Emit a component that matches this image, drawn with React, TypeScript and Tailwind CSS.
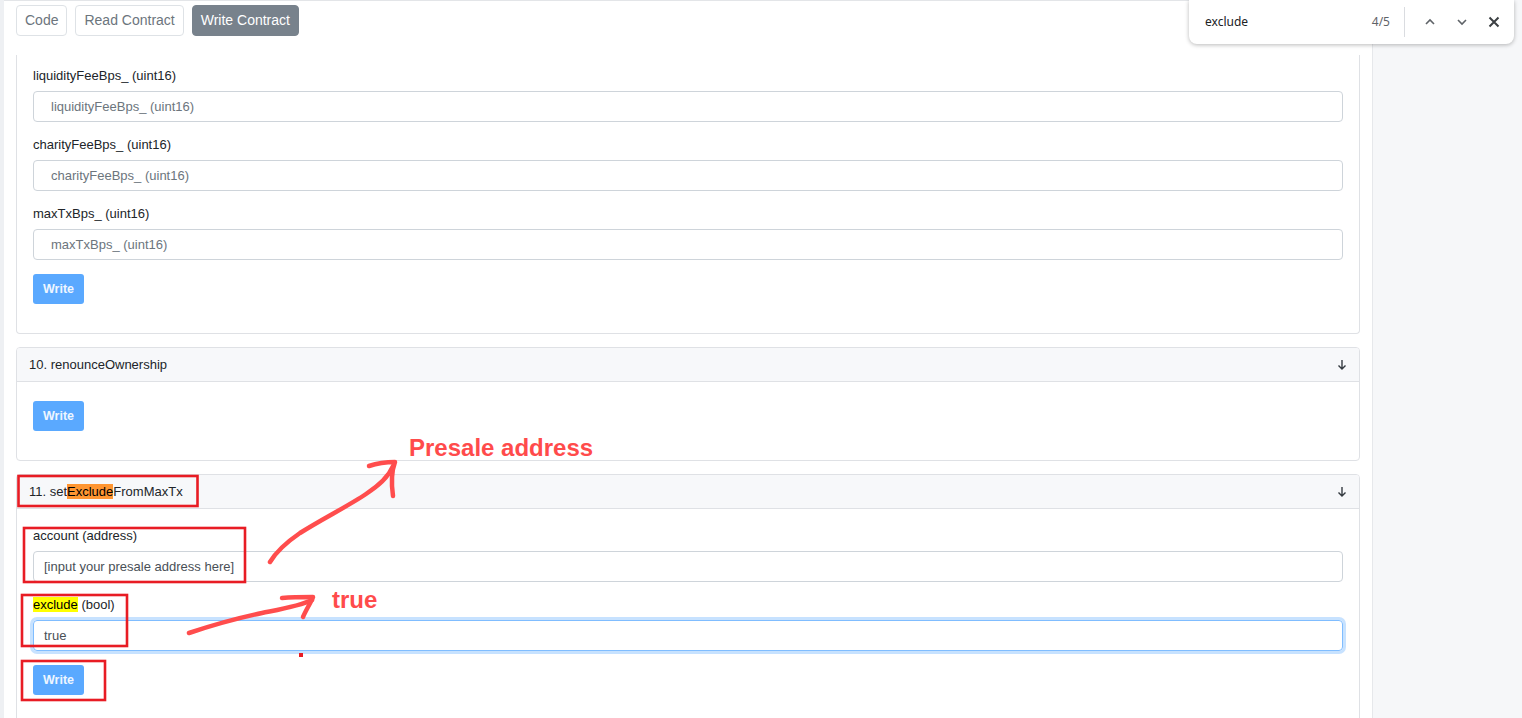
import React from "react";

const font = "font-['Liberation_Sans',Arial,sans-serif]";

function DownArrow() {
  return (
    <svg width="10" height="12" viewBox="0 0 10 12" className="text-[#343a40]">
      <path d="M5 1v9M1.5 6.5 5 10l3.5-3.5" fill="none" stroke="currentColor" strokeWidth="1.4" />
    </svg>
  );
}

function Field({ label, children }: { label: React.ReactNode; children: React.ReactNode }) {
  return (
    <div className="mb-[14px]">
      <div className="mb-[6px] text-[13px] leading-[18px] text-[#212529]">{label}</div>
      {children}
    </div>
  );
}

function Box({ placeholder, value, focused }: { placeholder?: string; value?: string; focused?: boolean }) {
  return (
    <div
      className={
        focused
          ? "flex h-[31px] items-center rounded-[4px] border border-[#80bdff] pl-[10px] text-[13px] text-[#495057] shadow-[0_0_0_3px_rgba(0,123,255,0.22)]"
          : "flex h-[31px] items-center rounded-[4px] border border-[#ced4da] pl-[10px] text-[13px] text-[#495057]"
      }
    >
      {placeholder ? <span className="pl-[7px] text-[#6c757d]">{placeholder}</span> : value}
    </div>
  );
}

function WriteButton() {
  return (
    <div className="flex h-[30px] w-[51px] items-center justify-center rounded-[3px] bg-[#5aa9ff] text-[12.5px] font-bold text-[#eef6ff]">
      Write
    </div>
  );
}

function Header({ children }: { children: React.ReactNode }) {
  return (
    <div className="flex h-[34px] items-center justify-between border-b border-[#dfe1e5] bg-[#f7f8fa] px-[12px] text-[13px] text-[#212529]">
      <span>{children}</span>
      <DownArrow />
    </div>
  );
}

export default function App() {
  return (
    <div className={`relative flex h-[718px] w-[1522px] overflow-hidden bg-white ${font}`}>
      <div className="w-[4px] shrink-0 bg-[#eef0f3]" />

      <main className="w-[1368px] shrink-0 border-t border-[#e3e5e8] px-[12px]">
        <div className="flex h-[54px] gap-[8px] pt-[4px]">
          <div className="flex h-[31px] items-center rounded-[4px] border border-[#dee2e6] px-[8px] text-[14px] text-[#6c757d]">
            Code
          </div>
          <div className="flex h-[31px] items-center rounded-[4px] border border-[#dee2e6] px-[8px] text-[14px] text-[#6c757d]">
            Read Contract
          </div>
          <div className="flex h-[31px] items-center rounded-[4px] border border-[#78828c] bg-[#78828c] px-[8px] text-[14px] text-white">
            Write Contract
          </div>
        </div>

        <section className="rounded-b-[4px] border border-t-0 border-[#dfe1e5] px-[16px] pb-[29px] pt-[12px]">
          <Field label="liquidityFeeBps_ (uint16)">
            <Box placeholder="liquidityFeeBps_ (uint16)" />
          </Field>
          <Field label="charityFeeBps_ (uint16)">
            <Box placeholder="charityFeeBps_ (uint16)" />
          </Field>
          <Field label="maxTxBps_ (uint16)">
            <Box placeholder="maxTxBps_ (uint16)" />
          </Field>
          <WriteButton />
        </section>

        <section className="mt-[13px] overflow-hidden rounded-[4px] border border-[#dfe1e5]">
          <Header>10. renounceOwnership</Header>
          <div className="px-[16px] pb-[29px] pt-[19px]">
            <WriteButton />
          </div>
        </section>

        <section className="mt-[13px] overflow-hidden rounded-[4px] border border-[#dfe1e5]">
          <Header>
            11. set<span className="bg-[#ff9632] text-black">Exclude</span>FromMaxTx
          </Header>
          <div className="px-[16px] pb-[29px] pt-[18px]">
            <Field label="account (address)">
              <Box value="[input your presale address here]" />
            </Field>
            <Field
              label={
                <>
                  <span className="bg-[#ffff00] text-black">exclude</span> (bool)
                </>
              }
            >
              <Box value="true" focused />
            </Field>
            <WriteButton />
          </div>
        </section>
      </main>

      <aside className="flex-1 border-l border-[#e6e8eb] bg-[#f6f7f9]" />

      {/* browser find bar */}
      <div className="absolute left-[1189px] top-0 flex h-[44px] w-[325px] items-center rounded-b-[8px] bg-white pl-[16px] pr-[14px] font-['Noto_Sans',sans-serif] shadow-[0_1px_4px_rgba(0,0,0,0.28)]">
        <span className="flex-1 text-[12px] text-[#202124]">exclude</span>
        <span className="text-[12px] text-[#5f6368]">4/5</span>
        <div className="ml-[14px] mr-[19px] h-[30px] w-px bg-[#dadce0]" />
        <svg width="12" height="12" viewBox="0 0 12 12" className="text-[#5f6368]">
          <path d="M2 8 6 4l4 4" fill="none" stroke="currentColor" strokeWidth="1.6" />
        </svg>
        <svg width="12" height="12" viewBox="0 0 12 12" className="ml-[20px] text-[#5f6368]">
          <path d="M2 4l4 4 4-4" fill="none" stroke="currentColor" strokeWidth="1.6" />
        </svg>
        <svg width="12" height="12" viewBox="0 0 12 12" className="ml-[20px] text-[#3c4043]">
          <path d="M1.5 1.5l9 9M10.5 1.5l-9 9" fill="none" stroke="currentColor" strokeWidth="2" />
        </svg>
      </div>

      {/* red annotations drawn over the screenshot */}
      <svg className="pointer-events-none absolute left-0 top-0" width="1522" height="718">
        <g fill="none" stroke="#e81c24" strokeWidth="2.6">
          <rect x="18.5" y="476" width="179" height="30" />
          <rect x="24" y="528" width="221" height="54" />
          <rect x="22" y="595" width="105" height="51" />
          <rect x="22" y="661" width="83" height="39" />
        </g>
        <g fill="none" stroke="#ff4d4d" strokeWidth="4.5" strokeLinecap="round" strokeLinejoin="round">
          <path d="M270 562 C276 552 284 544 300 533 C322 519 350 505 366 494 C378 486 388 478 393 466" />
          <path d="M369 466 C378 463 388 462 395 462 C392 470 391 482 393 496" />
          <path d="M189 633 C210 626 238 618 262 613 C282 609 300 606 312 600" />
          <path d="M282 598 C293 597 304 597 313 597 C310 604 306 610 303 617" />
        </g>
        <rect x="299" y="653" width="4" height="4" fill="#e81c24" />
      </svg>
      <div className="pointer-events-none absolute left-[409px] top-[433px] text-[24px] font-bold leading-[30px] text-[#ff4b4b]">
        Presale address
      </div>
      <div className="pointer-events-none absolute left-[332px] top-[585px] text-[24px] font-bold leading-[30px] text-[#ff4b4b]">
        true
      </div>
    </div>
  );
}
